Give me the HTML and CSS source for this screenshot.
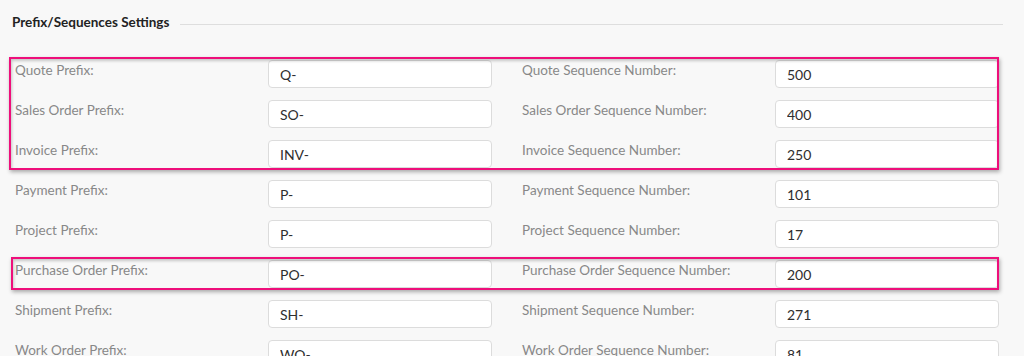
FILE: index.html
```html
<!DOCTYPE html>
<html>
<head>
<meta charset="utf-8">
<link rel="stylesheet" href="styles.css">
</head>
<body>
<div class="page">
  <div class="header">
    <h2 class="title">Prefix/Sequences Settings</h2>
    <div class="rule"></div>
  </div>
  <div class="rows">
    <div class="group">
      <div class="highlight hl-a"></div>
      <div class="row">
        <div class="field"><label class="label">Quote Prefix:</label><input class="input" value="Q-"></div>
        <div class="field"><label class="label">Quote Sequence Number:</label><input class="input" value="500"></div>
      </div>
      <div class="row">
        <div class="field"><label class="label">Sales Order Prefix:</label><input class="input" value="SO-"></div>
        <div class="field"><label class="label">Sales Order Sequence Number:</label><input class="input" value="400"></div>
      </div>
      <div class="row">
        <div class="field"><label class="label">Invoice Prefix:</label><input class="input" value="INV-"></div>
        <div class="field"><label class="label">Invoice Sequence Number:</label><input class="input" value="250"></div>
      </div>
    </div>
    <div class="row">
      <div class="field"><label class="label">Payment Prefix:</label><input class="input" value="P-"></div>
      <div class="field"><label class="label">Payment Sequence Number:</label><input class="input" value="101"></div>
    </div>
    <div class="row">
      <div class="field"><label class="label">Project Prefix:</label><input class="input" value="P-"></div>
      <div class="field"><label class="label">Project Sequence Number:</label><input class="input" value="17"></div>
    </div>
    <div class="group">
      <div class="highlight hl-b"></div>
      <div class="row">
        <div class="field"><label class="label">Purchase Order Prefix:</label><input class="input" value="PO-"></div>
        <div class="field"><label class="label">Purchase Order Sequence Number:</label><input class="input" value="200"></div>
      </div>
    </div>
    <div class="row">
      <div class="field"><label class="label">Shipment Prefix:</label><input class="input" value="SH-"></div>
      <div class="field"><label class="label">Shipment Sequence Number:</label><input class="input" value="271"></div>
    </div>
    <div class="row">
      <div class="field"><label class="label">Work Order Prefix:</label><input class="input" value="WO-"></div>
      <div class="field"><label class="label">Work Order Sequence Number:</label><input class="input" value="81"></div>
    </div>
  </div>
</div>
</body>
</html>
```
FILE: styles.css
```css
html, body {
  margin: 0;
  padding: 0;
  background: #f8f8f8;
  font-family: Lato, "Noto Sans", sans-serif;
  overflow: hidden;
}
.page {
  width: 1024px;
}
.header {
  display: flex;
  align-items: center;
  padding: 12px 21px 0 12px;
  height: 20px;
  margin-bottom: 28px;
}
.title {
  margin: 0;
  font-size: 13.5px;
  line-height: 20px;
  font-weight: 700;
  color: #222;
  white-space: nowrap;
}
.rule {
  flex: 1;
  margin-left: 11px;
  margin-top: 5px;
  border-top: 1px solid #dedede;
}
.rows {
  display: flex;
  flex-direction: column;
  gap: 12px;
  padding: 0 25px 0 15px;
}
.group {
  position: relative;
  display: flex;
  flex-direction: column;
  gap: 12px;
}
.row {
  display: grid;
  grid-template-columns: 477px 477px;
  column-gap: 30px;
}
.field {
  display: flex;
  align-items: flex-start;
}
.label {
  width: 253px;
  flex: none;
  font-size: 13.5px;
  line-height: 20px;
  color: #888;
}
.input {
  box-sizing: border-box;
  width: 224px;
  height: 28px;
  margin: 0;
  padding: 0 0 0 11px;
  border: 1px solid #dcdcdc;
  border-radius: 4px;
  background: #fff;
  font-family: Lato, "Noto Sans", sans-serif;
  font-size: 14px;
  color: #2e2e2e;
  outline: none;
}
.highlight {
  position: absolute;
  top: -3px;
  bottom: -2px;
  right: 0;
  border: 2px solid #ee0f7b;
  box-shadow: 1px 2px 4px rgba(0, 0, 0, 0.32), inset 1px 2px 3px rgba(0, 0, 0, 0.2);
  pointer-events: none;
  z-index: 2;
}
.hl-a {
  left: -6px;
}
.hl-b {
  left: -4px;
}
```
